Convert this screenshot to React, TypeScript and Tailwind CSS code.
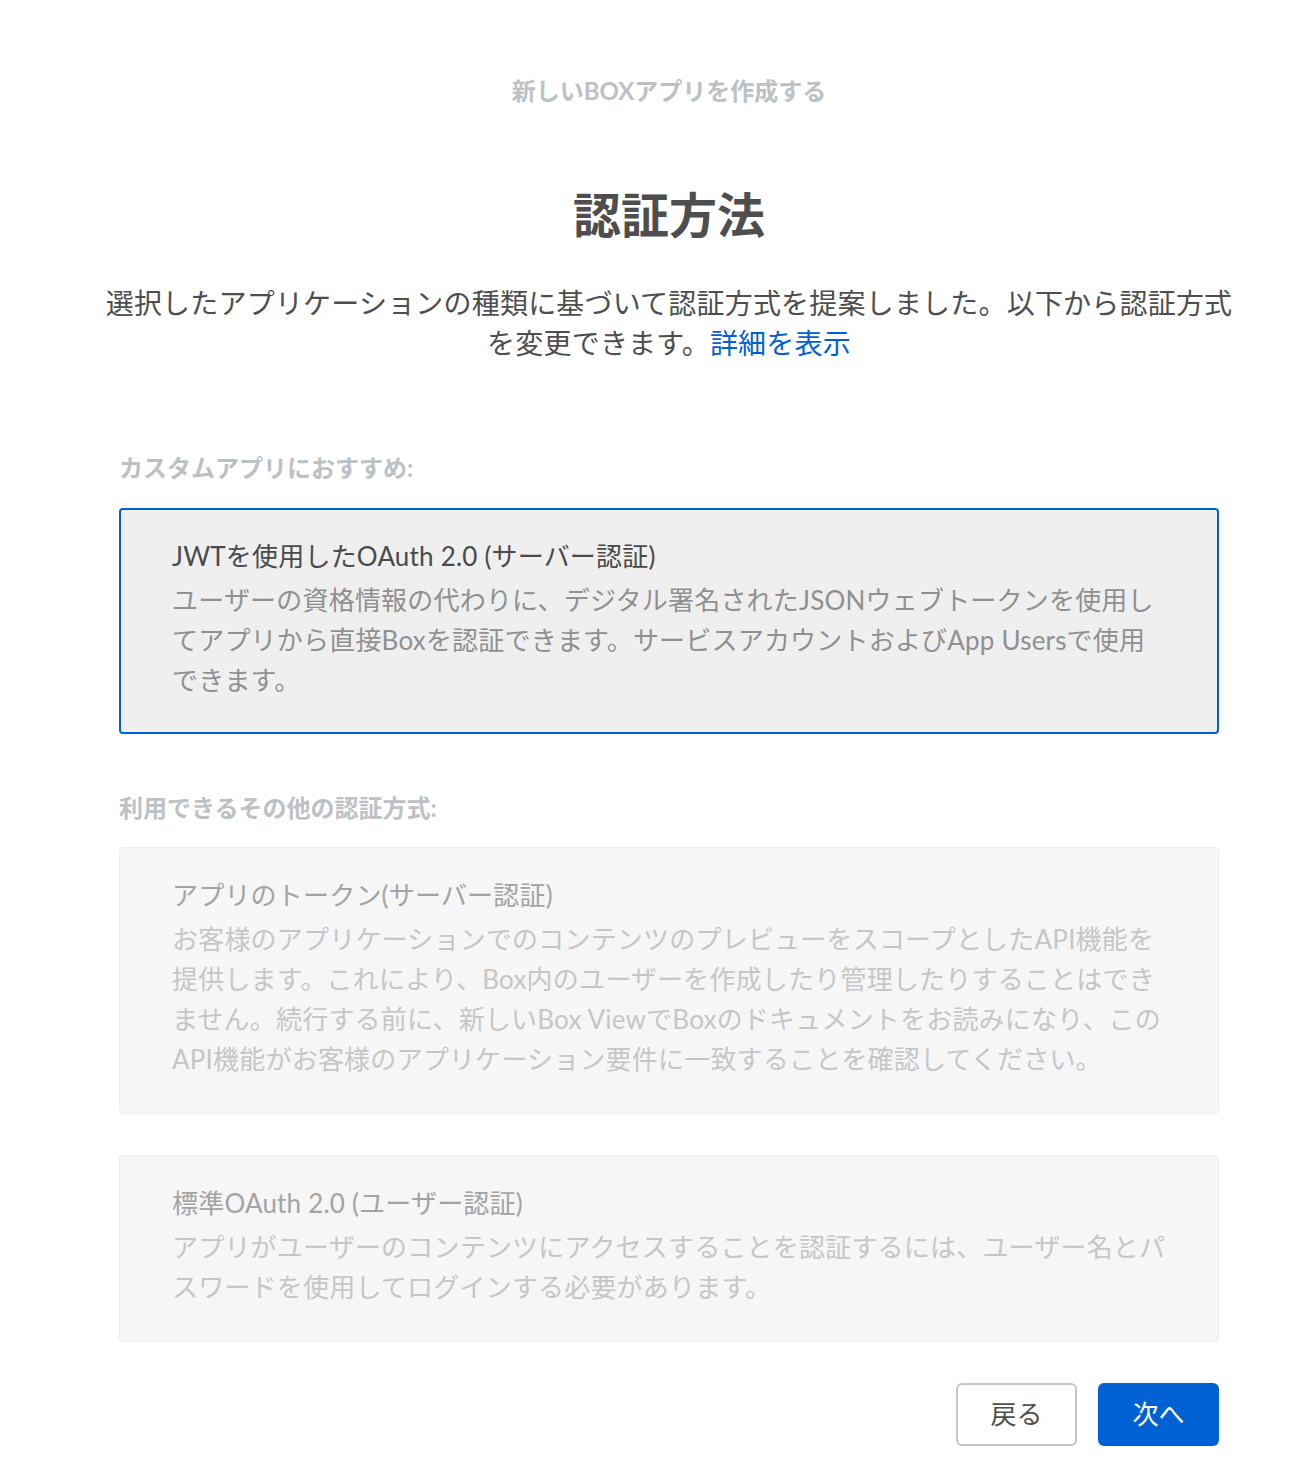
import React from "react";

const font = { fontFamily: 'Lato, "Noto Sans CJK JP", sans-serif' };

function Card({
  title,
  lines,
  active,
}: {
  title: string;
  lines: string[];
  active?: boolean;
}) {
  return (
    <div
      className={
        active
          ? "rounded-[4px] border-2 border-[#0061d5] bg-[#efefef] pl-[51px] pr-[40px] pt-[26px] pb-[32px]"
          : "rounded-[4px] border border-[#ededed] bg-[#f6f6f6] pl-[52px] pr-[40px] pt-[27px] pb-[34px]"
      }
    >
      <div
        className={
          "text-[26px] leading-[40px] mb-[4px] whitespace-nowrap tracking-[0.2px] " +
          (active ? "text-[#4a4a4a]" : "text-[#a3a3a3]")
        }
      >
        {title}
      </div>
      {lines.map((l, i) => (
        <div
          key={i}
          className={
            "text-[26px] leading-[40px] whitespace-nowrap tracking-[0.2px] " +
            (active ? "text-[#909090]" : "text-[#c6c6c6]")
          }
        >
          {l}
        </div>
      ))}
    </div>
  );
}

export default function App() {
  return (
    <div className="min-h-[1470px] w-[1292px] bg-white" style={font}>
      <div className="ml-[105px] w-[1128px] pt-[75px] pb-[24px]">
        <div className="text-center text-[24px] leading-[32px] font-bold text-[#bcc1c6]">
          新しいBOXアプリを作成する
        </div>
        <div className="mt-[76px] text-center text-[48px] leading-[64px] font-bold text-[#4e4e4e]">
          認証方法
        </div>
        <div className="mt-[36px] text-center text-[28px] leading-[40px] tracking-[0.2px] text-[#4e4e4e]">
          <div className="whitespace-nowrap">
            選択したアプリケーションの種類に基づいて認証方式を提案しました。以下から認証方式
          </div>
          <div className="whitespace-nowrap">
            を変更できます。<span className="text-[#0061d5]">詳細を表示</span>
          </div>
        </div>

        <div className="px-[14px]">
          <div className="mt-[89px] text-[24px] leading-[32px] font-bold text-[#bcc1c6]">
            カスタムアプリにおすすめ:
          </div>
          <div className="mt-[24px]">
            <Card
              active
              title="JWTを使用したOAuth 2.0 (サーバー認証)"
              lines={[
                "ユーザーの資格情報の代わりに、デジタル署名されたJSONウェブトークンを使用し",
                "てアプリから直接Boxを認証できます。サービスアカウントおよびApp Usersで使用",
                "できます。",
              ]}
            />
          </div>

          <div className="mt-[58px] text-[24px] leading-[32px] font-bold text-[#bcc1c6]">
            利用できるその他の認証方式:
          </div>
          <div className="mt-[23px]">
            <Card
              title="アプリのトークン(サーバー認証)"
              lines={[
                "お客様のアプリケーションでのコンテンツのプレビューをスコープとしたAPI機能を",
                "提供します。これにより、Box内のユーザーを作成したり管理したりすることはでき",
                "ません。続行する前に、新しいBox ViewでBoxのドキュメントをお読みになり、この",
                "API機能がお客様のアプリケーション要件に一致することを確認してください。",
              ]}
            />
          </div>
          <div className="mt-[41px]">
            <Card
              title="標準OAuth 2.0 (ユーザー認証)"
              lines={[
                "アプリがユーザーのコンテンツにアクセスすることを認証するには、ユーザー名とパ",
                "スワードを使用してログインする必要があります。",
              ]}
            />
          </div>

          <div className="mt-[41px] flex justify-end gap-[21px]">
            <button className="h-[63px] w-[121px] rounded-[6px] border-2 border-[#c2c5c9] bg-white text-[26px] text-[#4e4e4e]">
              戻る
            </button>
            <button className="h-[63px] w-[121px] rounded-[6px] bg-[#0061d5] text-[26px] text-white">
              次へ
            </button>
          </div>
        </div>
      </div>
    </div>
  );
}
